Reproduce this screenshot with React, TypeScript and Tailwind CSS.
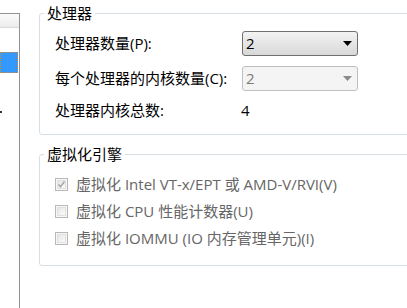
import React from 'react';

const Select = ({ value, disabled }: { value: string; disabled?: boolean }) => (
  <div
    className={`flex h-[25px] w-[116px] items-center justify-between rounded-[3px] border pl-[3px] pr-[5px] text-[15px] ${
      disabled
        ? 'border-[#bcc0c3] bg-[#f4f4f4] text-[#7a7a7a]'
        : 'border-[#707070] bg-linear-to-b from-[#f3f3f3] to-[#d8d8d8] text-black'
    }`}
  >
    <span className="leading-none">{value}</span>
    <svg width="9" height="5" viewBox="0 0 9 5">
      <polygon points="0,0 9,0 4.5,5" fill={disabled ? '#8a8a8a' : '#000'} />
    </svg>
  </div>
);

const CheckBox = ({ checked }: { checked?: boolean }) => (
  <span className="flex h-[13px] w-[13px] shrink-0 items-center justify-center border border-[#b8b8b8] bg-[#f7f7f7]">
    <span className="relative h-[9px] w-[9px] border border-[#e0e0e0] bg-linear-to-br from-[#e6e6e6] to-[#fbfbfb]">
      {checked && (
        <svg className="absolute -left-[1px] -top-[1px]" width="9" height="9" viewBox="0 0 9 9">
          <path d="M1.5 4.5 L3.5 6.8 L7.5 1.5" fill="none" stroke="#a9a9a9" strokeWidth="1.6" />
        </svg>
      )}
    </span>
  </span>
);

const options = [
  { label: '虚拟化 Intel VT-x/EPT 或 AMD-V/RVI(V)', checked: true },
  { label: '虚拟化 CPU 性能计数器(U)', checked: false },
  { label: '虚拟化 IOMMU (IO 内存管理单元)(I)', checked: false },
];

export default function App() {
  return (
    <div className="flex h-[308px] w-[407px] overflow-hidden bg-white font-['Open_Sans','Noto_Sans_CJK_SC',sans-serif] text-[15px] text-black">
      {/* list on the left */}
      <div className="mt-[13px] w-[20px] shrink-0 border-t border-r border-[#8e9398]">
        <div className="h-[14px] border-b border-[#dadada] bg-linear-to-b from-[#fbfbfb] to-[#ececec]" />
        <div className="mt-[24px] h-[21px] w-[18px] border border-dotted border-[#d08a3a] bg-[#3399ff]" />
        <div className="mt-[38px] h-[2px] w-[2px] bg-[#333]" />
      </div>

      <div className="ml-[19px] w-[420px] shrink-0">
        {/* 处理器 */}
        <fieldset className="mt-[3px] rounded-[3px] border border-[#d5dfe5] pl-[4px] pb-[14px]">
          <legend className="px-[3px] leading-[20px]">处理器</legend>
          <div className="ml-[11px] pt-[8px]">
            <div className="flex h-[25px] items-center">
              <span className="w-[187px]">处理器数量(P):</span>
              <Select value="2" />
            </div>
            <div className="mt-[10px] flex h-[25px] items-center">
              <span className="w-[187px]">每个处理器的内核数量(C):</span>
              <Select value="2" disabled />
            </div>
            <div className="mt-[9px] flex h-[20px] items-center">
              <span className="w-[186px]">处理器内核总数:</span>
              <span>4</span>
            </div>
          </div>
        </fieldset>

        {/* 虚拟化引擎 */}
        <fieldset className="mt-[9px] rounded-[3px] border border-[#d5dfe5] pl-[4px] pb-[13px]">
          <legend className="px-[3px] leading-[20px]">虚拟化引擎</legend>
          <div className="ml-[11px] pt-[7px] text-[#666]">
            {options.map((o) => (
              <div key={o.label} className="flex h-[27px] items-center gap-[8px]">
                <CheckBox checked={o.checked} />
                <span>{o.label}</span>
              </div>
            ))}
          </div>
        </fieldset>
      </div>
    </div>
  );
}
